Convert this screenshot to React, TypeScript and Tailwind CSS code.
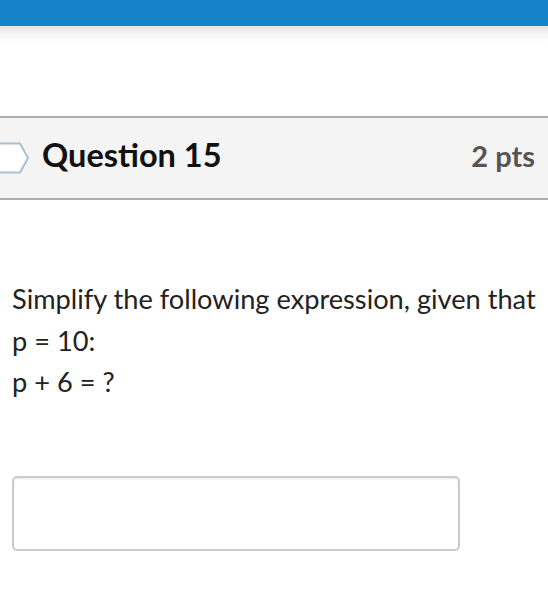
export default function App() {
  return (
    <div className="w-[548px] h-[605px] bg-white overflow-hidden font-['Lato',sans-serif]">
      <div className="h-[26px] bg-[#1481c8]" />
      <div className="h-[16px] bg-gradient-to-b from-[#e6e6e6] to-white" />

      <div className="mt-[74px] h-[84px] border-t-2 border-b-2 border-[#aeaeae] bg-[#f4f4f4] flex items-center justify-between pr-[13px] pb-[5px]">
        <div className="flex items-center">
          <svg width="30" height="32" viewBox="0 0 30 32" className="mr-[12px] mt-[4px]">
            <path d="M-4 1.5 L20 1.5 L28 16 L20 30.5 L-4 30.5 Z" fill="white" stroke="#a9bfce" strokeWidth="2" />
          </svg>
          <h2 className="text-[32.5px] font-bold text-[#111]">Question 15</h2>
        </div>
        <span className="text-[29px] font-bold text-[#555]">2 pts</span>
      </div>

      <div className="px-[12px] pt-[78px] text-[27.2px] leading-[41.5px] text-[#222]">
        <p className="whitespace-nowrap">Simplify the following expression, given that</p>
        <p>p = 10:</p>
        <p>p + 6 = ?</p>
      </div>

      <div className="mx-[12px] mt-[73px] w-[448px] h-[75px] border-2 border-[#cccccc] rounded-[5px] shadow-[inset_0_1px_2px_rgba(0,0,0,0.08)]" />
    </div>
  );
}
